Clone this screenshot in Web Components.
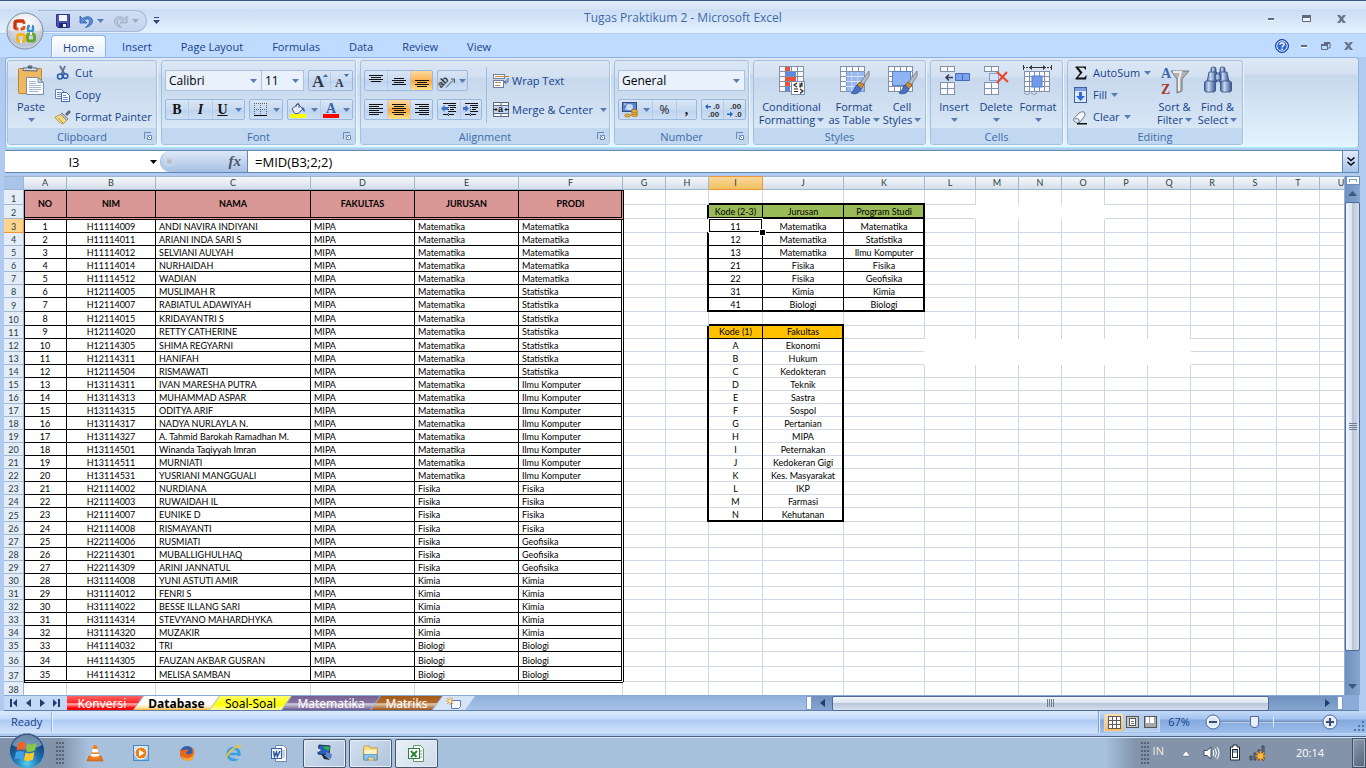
<!DOCTYPE html>
<html lang="id">
<head>
<meta charset="utf-8">
<title>Tugas Praktikum 2 - Microsoft Excel</title>
<style>
html, body { margin: 0; height: 100%; overflow: hidden; background: #b1caf0; }
</style>
</head>
<body>
<xl-app></xl-app>
<script>
const BASE = `
  :host { display: block; box-sizing: border-box; }
  *, *::before, *::after { box-sizing: border-box; }
  button, input, select { font: inherit; color: inherit; margin: 0; padding: 0; border: 0; background: none; border-radius: 0; outline: 0; }
  button { display: flex; align-items: center; justify-content: center; white-space: nowrap; }
  select { appearance: none; }
  xl-icon { flex: none; }
`;
function define(name, css, html, setup) {
  const tpl = document.createElement('template');
  tpl.innerHTML = '<style>' + BASE + css + '</style>' + html;
  customElements.define(name, class extends HTMLElement {
    constructor() {
      super();
      this.attachShadow({ mode: 'open' });
    }
    connectedCallback() {
      if (this.shadowRoot.childNodes.length) return;
      this.shadowRoot.append(tpl.content.cloneNode(true));
      if (setup) setup.call(this, this.shadowRoot);
    }
  });
}

/* ---------- icons: [width, height, markup] ---------- */
const lines = (list, c) => list.map(([x, y, w]) => `<rect x="${x}" y="${y}" width="${w}" height="1" fill="${c || '#111'}"/>`).join('');
const grid = (x, y, c, r, w, h, s) => {
  let o = `<rect x="${x}" y="${y}" width="${c * w + 1}" height="${r * h + 1}" fill="${s || '#8290a8'}"/>`;
  for (let i = 0; i < c; i++) for (let j = 0; j < r; j++)
    o += `<rect x="${x + i * w + 1}" y="${y + j * h + 1}" width="${w - 1}" height="${h - 1}" fill="#f8faff"/>`;
  return o;
};
const brush = `<path d="M27 4L18 16l3 2 6-9z" fill="#b9bcc4" stroke="#70757f" stroke-width=".8"/><path d="M18 15l-3 3 4 4 3-4z" fill="#c98b3c" stroke="#7a5426" stroke-width=".8"/><path d="M15 18c-2 1-2 3-3 5-1 2-3 2-3 3 4 2 9 0 10-4z" fill="#4672c4" stroke="#2c4c90" stroke-width=".8"/>`;
const grip = (() => { let o = ''; for (let y = 0; y < 6; y++) for (let x = 0; x < 3; x++) o += `<rect x="${x * 3}" y="${y * 4}" width="2" height="2" fill="#53637a"/>`; return o; })();
const ICONS = {
  arrow: [7, 4, `<path d="M0 0h7L3.500 4z" fill="#587db5"/>`],
  arrowdim: [7, 4, `<path d="M0 0h7L3.500 4z" fill="#a0aabd"/>`],
  arrowblack: [7, 4, `<path d="M0 0h7L3.500 4z" fill="#000"/>`],
  launch: [8, 8, `<path d="M.5 7V.5H7" fill="none" stroke="#6787b4"/><path d="M3.500 4.500v3h4v-4h-3" fill="#fff" stroke="#6787b4"/><path d="M3 3l3 3" stroke="#6787b4"/>`],
  office: [38, 38, `<defs><radialGradient id="o" cx=".5" cy=".3" r=".75"><stop offset="0" stop-color="#fff"/><stop offset=".55" stop-color="#e3e6ec"/><stop offset=".8" stop-color="#c3cad6"/><stop offset="1" stop-color="#f4f8ff"/></radialGradient></defs><circle cx="19" cy="19" r="18" fill="url(#o)" stroke="#7d899e"/><path d="M2 19a17 17 0 0 0 34 0z" fill="#a9b4c8" opacity=".35"/><g fill="none" stroke-width="3"><rect x="9" y="9" width="9" height="8" rx="2" stroke="#e2561a"/><path d="M9 17V11q0-2 2-2h7" stroke="#c83210"/><rect x="22" y="14" width="5" height="5" rx="1" stroke="#3d8fd4" stroke-width="2.500"/><rect x="11.500" y="22.500" width="7" height="7" rx="2" stroke="#f4b41e"/><rect x="21.500" y="22" width="7" height="7" rx="2" stroke="#62a832"/></g><g fill="#eef0f5"><rect x="12.500" y="15" width="2" height="4"/><rect x="16" y="12" width="4" height="2"/><rect x="24" y="12" width="2" height="3"/><rect x="14" y="28" width="2" height="3"/><rect x="24" y="20" width="2" height="3"/></g>`],
  save: [14, 14, `<path d="M.5.5h13v13H2L.5 12z" fill="#4f55b5" stroke="#2f3487"/><rect x="3" y="1" width="8" height="6" fill="#f4f6ff"/><rect x="3" y="9" width="8" height="5" fill="#23276b"/><rect x="7" y="10" width="3" height="3" fill="#e8ecfa"/>`],
  undo: [14, 13, `<path d="M1 1v7h7L5.500 5.500C8 3 11 4 10.500 7c-.3 2-2 3.500-4 5.500 4-1 7-3 7-6.500C13.500 1.500 8 .5 3.500 3.500z" fill="#5b8bd8" stroke="#2e5cab" stroke-width=".8"/>`],
  redo: [14, 13, `<path d="M13 1v7H6l2.500-2.500C6 3 3 4 3.500 7c.3 2 2 3.500 4 5.500-4-1-7-3-7-6.500C.5 1.500 6 .5 10.500 3.500z" fill="#bcc8da" stroke="#98a7bf" stroke-width=".8"/>`],
  custom: [7, 7, `<path d="M1 0h5v1H1zM0 3h7L3.500 7z" fill="#2d4a7b"/>`],
  min: [7, 3, `<rect width="6" height="2" fill="#5f6b7d"/><rect y="2" width="6" height="1" fill="#fff"/>`],
  max: [10, 8, `<path d="M.5.500h8v6h-8z" fill="#eef4fd" stroke="#5f6b7d"/><rect width="9" height="3" fill="#5f6b7d"/>`],
  restore: [10, 8, `<path d="M3 1h6v5H7M.5 2.500h6v5h-6z" fill="none" stroke="#5f6b7d"/><path d="M3 0h6v2H3zM0 2h7v2H0z" fill="#5f6b7d"/>`],
  close: [9, 8, `<path d="M0 0h3l1.500 2L6 0h3L6 4l3 4H6L4.500 6 3 8H0l3-4z" fill="#69758a"/>`],
  help: [14, 14, `<circle cx="7" cy="7" r="6.500" fill="#2f66cf" stroke="#17439b"/><circle cx="7" cy="7" r="5.200" fill="none" stroke="#e8f0ff"/><path d="M5 5.500C5 3.500 9 3.500 9 5.500 9 7 7 7 7 8.500M7 9.500V11" stroke="#fff" stroke-width="1.500" fill="none"/>`],
  paste: [28, 32, `<rect x="1.500" y="3.500" width="23" height="25" rx="1" fill="#eeb95e" stroke="#ba8236"/><path d="M6 5.500V3h4c0-3 6-3 6 0h4v3z" fill="#d7dce6" stroke="#596780"/><rect x="11" y="1.500" width="4" height="2" fill="#4b5569"/><path d="M9.500 12.500h12l5 5v12h-17z" fill="#fafcff" stroke="#7c8cab"/><path d="M21 12.500v5h5z" fill="#c7d3ea" stroke="#7c8cab"/>${lines([[12, 16, 7], [12, 18, 7], [12, 20, 12], [12, 22, 12], [12, 24, 12], [12, 26, 9]], '#a9b6cf')}`],
  cut: [16, 16, `<path d="M5 1l4.500 8M10 1L6.500 9" stroke="#62708a" stroke-width="1.800"/><circle cx="5" cy="11.500" r="2.500" fill="none" stroke="#2f5cae" stroke-width="1.600"/><circle cx="10.500" cy="11" r="2.300" fill="none" stroke="#2f5cae" stroke-width="1.600"/>`],
  copy: [16, 16, `<path d="M.5 2.500h6l3 3v6h-9z" fill="#fff" stroke="#5b7fc0"/>${lines([[2, 5, 4], [2, 7, 5], [2, 9, 5]], '#6c90d0')}<path d="M6.500 5.500h5l3 3v6h-8z" fill="#fff" stroke="#3f66ae"/>${lines([[8, 8, 3], [8, 10, 5], [8, 12, 5]], '#6c90d0')}`],
  painter: [16, 16, `<path d="M10 5l4-4 2 2-4 4z" fill="#62677c"/><path d="M7 4l6 6-2 2-6-6z" fill="#b9c0d0" stroke="#636c80" stroke-width=".8"/><path d="M5.500 5.500L0 8c2 4 5 6 8 7l3.500-3.500z" fill="#f0d886" stroke="#a88b33" stroke-width=".8"/><path d="M3 9l5 5" stroke="#b89a42"/>`],
  grow: [18, 16, `<text x="1" y="14" font-family="Liberation Serif,serif" font-weight="700" font-size="17" fill="#333a47">A</text><path d="M12 4h5L14.500 1z" fill="#3f6ab5"/>`],
  shrink: [16, 16, `<text x="1" y="14" font-family="Liberation Serif,serif" font-weight="700" font-size="12" fill="#333a47">A</text><path d="M10 1h5L12.500 4z" fill="#3f6ab5"/>`],
  borders: [14, 14, `<path d="M.5 0v12M6.500 0v12M12.500 0v12M0 .5h13M0 6.500h13" stroke="#5d6675" stroke-dasharray="1 1" fill="none"/><rect y="12" width="13" height="1" fill="#000"/>`],
  fill: [17, 16, `<path d="M2 7l6-5 5 5-5 4.500H5z" fill="#e8eefa" stroke="#4a5875"/><path d="M6 5c0-4 3-5 3-2v3" fill="none" stroke="#4a5875"/><path d="M12 5c3 1 3 3 2.500 5-2-1-1-3-3-3z" fill="#3366b8"/><rect y="12" width="16" height="4" fill="#ffff00"/>`],
  color: [16, 16, `<text x="3" y="11" font-family="Liberation Serif,serif" font-weight="700" font-size="14" fill="#3b5ea6">A</text><rect y="12" width="16" height="4" fill="#ff0000"/>`],
  vtop: [14, 14, lines([[0, 1, 14], [2, 3, 10], [0, 5, 14], [2, 7, 10]])],
  vmid: [14, 14, lines([[2, 4, 10], [0, 6, 14], [2, 8, 10], [0, 10, 14]])],
  vbot: [14, 14, lines([[0, 6, 14], [2, 8, 10], [0, 10, 14], [2, 12, 10]])],
  left: [14, 12, lines([[0, 0, 14], [0, 2, 10], [0, 4, 14], [0, 6, 10], [0, 8, 14], [0, 10, 10]])],
  center: [14, 12, lines([[0, 0, 14], [2, 2, 10], [0, 4, 14], [2, 6, 10], [0, 8, 14], [2, 10, 10]])],
  right: [14, 12, lines([[0, 0, 14], [4, 2, 10], [0, 4, 14], [4, 6, 10], [0, 8, 14], [4, 10, 10]])],
  orient: [16, 16, `<text x="-1" y="13" font-family="Liberation Sans,sans-serif" font-weight="700" font-size="10" fill="#333" transform="rotate(-45 3 12)">ab</text><path d="M6 14.500l8-8M14.500 10V6H11" stroke="#555" fill="none"/>`],
  outdent: [16, 14, lines([[2, 0, 5], [8, 0, 7], [8, 2, 7], [9, 4, 6], [9, 6, 4], [8, 8, 7], [2, 11, 5], [8, 11, 5]]) + `<path d="M7.500 0v14" stroke="#333" stroke-dasharray="1 1"/><path d="M0 5.500L3.500 2v2H7v3H3.500v2z" fill="#3f72c8"/>`],
  indent: [16, 14, lines([[2, 0, 5], [8, 0, 7], [8, 2, 7], [9, 4, 6], [9, 6, 4], [8, 8, 7], [2, 11, 5], [8, 11, 5]]) + `<path d="M7.500 0v14" stroke="#333" stroke-dasharray="1 1"/><path d="M6 5.500L2.500 2v2H0v3h2.500v2z" fill="#3f72c8"/>`],
  wrap: [16, 16, `<rect x=".5" y="1.500" width="11" height="4" fill="#fff" stroke="#6c7f9c"/><path d="M2 3.500h14" stroke="#c08a4a"/><rect x=".5" y="7.500" width="10" height="7" fill="#fff" stroke="#6c7f9c"/><path d="M2 9.500h6M2 12.500h5" stroke="#c08a4a"/><path d="M15 5v4h-3M13.500 7L11 9l2.500 2" stroke="#41659c" fill="none"/>`],
  merge: [16, 16, `<rect x=".5" y=".5" width="15" height="14" fill="#fff" stroke="#5c6a84"/><path d="M0 3.500h16M0 11.500h16M8 0v3.500M8 11.500V15" stroke="#5c6a84"/><rect x="1" y="4" width="14" height="7" fill="#c7d9f5"/><text x="5" y="10" font-family="Liberation Sans,sans-serif" font-weight="700" font-size="9" fill="#111">a</text><path d="M0 7.500h4M2.500 6L4 7.500 2.500 9M16 7.500h-4M13.500 6L12 7.500 13.500 9" stroke="#222" fill="none"/>`],
  money: [17, 17, `<rect x=".5" y="1.500" width="14" height="9" fill="#5f86cc" stroke="#2c4a86"/><ellipse cx="7.500" cy="6" rx="3.500" ry="3" fill="#c8d8f4"/><path d="M3 8h6M2 3h2" stroke="#dfe9fb"/><g fill="#f0b93c" stroke="#9a6a14" stroke-width=".7"><ellipse cx="12.500" cy="14" rx="3" ry="1.500"/><ellipse cx="12.500" cy="12" rx="3" ry="1.500"/><ellipse cx="12.500" cy="10" rx="3" ry="1.500"/><ellipse cx="5.500" cy="14.500" rx="3" ry="1.500"/></g>`],
  incdec: [16, 14, `<g font-family="Liberation Sans,sans-serif" font-weight="700" font-size="8" fill="#333"><text x="8" y="6">.0</text><text x="3" y="14">.00</text></g><path d="M0 3.500L3 1v2h3v1.500H3v2z" fill="#2f63c0"/>`],
  decdec: [16, 14, `<g font-family="Liberation Sans,sans-serif" font-weight="700" font-size="8" fill="#333"><text x="3" y="6">.00</text><text x="8" y="14">.0</text></g><path d="M6 11L3 8.500v2H0V12h3v2z" fill="#2f63c0"/>`],
  cond: [30, 30, grid(2, 1, 4, 5, 6, 5) + `<path d="M8 2h5v4H8zM8 12h11v4H8zM8 17h5v4H8z" fill="#e8523c"/><path d="M8 7h11v4H8zM8 22h5v4H8z" fill="#5b8ae0"/><rect x="14.500" y="16.500" width="13" height="13" fill="#fff" stroke="#7c8cab"/><path d="M20 18l-3 2 3 2M17 24h4M17 26.500h4M23 24l3 2-3 2.500M22 19h4M22 21h4M25 17.500l-2 5" stroke="#222" fill="none" stroke-width="1.200"/>`],
  fmttable: [30, 30, grid(1, 1, 4, 5, 6, 5) + `<path d="M7 7h18v20H7z" fill="#6f9bea" opacity=".7"/><path d="M13 7v20M19 7v20M7 11.500h18M7 16.500h18M7 21.500h18" stroke="#dbe6fb"/><g transform="translate(3 2)">${brush}</g>`],
  cellstyle: [30, 30, grid(1, 1, 4, 5, 6, 5) + `<rect x="5.500" y="6.500" width="18" height="14" fill="#8db3f4" stroke="#5a80c8"/><g transform="translate(3 2)">${brush}</g>`],
  insert: [32, 32, grid(2, 1, 2, 1, 7, 5) + grid(2, 17, 2, 2, 7, 6) + `<path d="M17.500 8.500h14v7h-14zM24.500 8.500v7" fill="#7ba2ee" stroke="#476db8"/><path d="M8 12.500h7M11 9.500l-3 3 3 3" stroke="#333f55" fill="none" stroke-width="1.500"/>`],
  delete: [32, 32, grid(4, 1, 2, 1, 7, 5) + grid(4, 17, 2, 2, 7, 6) + `<rect x="9.500" y="8.500" width="9" height="7" fill="#d5e3fa" stroke="#3a63b0" stroke-dasharray="1 1"/><path d="M17 7l11 10M27 7L17 18" stroke="#ee4426" stroke-width="2"/>`],
  format: [32, 32, `<path d="M1 2.500h29" stroke="#333" stroke-dasharray="2 1"/><path d="M1.500 0v5M29.500 0v5M8 2.500h14" stroke="#333"/><path d="M7 2.500l3-2.500v5zM24 2.500L21 0v5z" fill="#333"/>` + grid(2, 6, 5, 4, 5, 5) + `<rect x="10" y="11" width="10" height="11" fill="#6f9bea" stroke="#557fd0"/><path d="M2 28q3 3 6 0M9 28q3 3 6 0" stroke="#7c8cab" fill="#fff"/>`],
  sigma: [14, 14, `<path d="M1.500.5h10.500v3h-1C10.500 2 10 1.800 8 1.800H4.500l4 4.700-4.500 5h5c1.500 0 2.300-.5 2.800-2h1l-.8 4H1.500v-1L6 7 1.500 1.500z" fill="#111"/>`],
  filldown: [14, 17, `<rect x=".5" y=".5" width="12" height="15" fill="#dfe9fb" stroke="#42609a"/><rect x="1" y="1" width="11" height="3" fill="#7ca1e3"/><path d="M5 5h3v4h3l-4.500 5L2 9h3z" fill="#2f6bd6"/>`],
  clear: [16, 15, `<path d="M5 13.500L1 11q-1-1 0-2.500L6 3q3-2 5-1l1 2q0 2-1 3L7 12q-1 1.500-2 1.500z" fill="#fafbff" stroke="#6d7789"/><path d="M1.500 9q2-1 4 0 1.500 2 0 4" fill="#dfe4ee" stroke="#6d7789"/><rect x="4" y="13" width="10" height="1.500" fill="#111"/>`],
  sort: [32, 32, `<g font-family="Liberation Serif,serif" font-weight="700" font-size="14"><text x="2" y="13" fill="#3a62ae">A</text><text x="2" y="29" fill="#a8372c">Z</text></g><path d="M12 6h18L23 14v12l-5 2V14z" fill="#b1b2b4" stroke="#77797d"/><path d="M14 7h8l-2 7v12" stroke="#ececec" stroke-width="2" fill="none"/>`],
  find: [30, 30, `<defs><linearGradient id="b"><stop offset="0" stop-color="#3e5f9f"/><stop offset=".35" stop-color="#c9d9f3"/><stop offset="1" stop-color="#35558f"/></linearGradient></defs><g fill="url(#b)" stroke="#2f4b80" stroke-width=".8"><rect x="8" y="2" width="5" height="6" rx="2"/><rect x="17" y="2" width="5" height="6" rx="2"/><path d="M6 7h8v10H4z"/><path d="M16 7h8l2 10H16z"/><rect x="1.500" y="16" width="11" height="11" rx="2"/><rect x="17.500" y="16" width="11" height="11" rx="2"/><rect x="12" y="9" width="6" height="6"/></g>`],
  expand: [8, 9, `<path d="M0.500 0.500L4 3.500 7.500.5M.5 5L4 8 7.500 5" stroke="#000" stroke-width="1.500" fill="none"/>`],
  first: [8, 8, `<path d="M0 0h2v8H0zM7 0v8L3 4z" fill="#1f3c73"/>`],
  prev: [5, 8, `<path d="M5 0v8L0 4z" fill="#1f3c73"/>`],
  next: [5, 8, `<path d="M0 0v8l5-4z" fill="#1f3c73"/>`],
  last: [8, 8, `<path d="M5 0h2v8H5zM0 0v8l4-4z" fill="#1f3c73"/>`],
  up: [9, 5, `<path d="M0 5h9L4.500 0z" fill="#3f557f"/>`],
  down: [9, 5, `<path d="M0 0h9L4.500 5z" fill="#3f557f"/>`],
  newsheet: [16, 13, `<path d="M5.500 3.500h9v6l-2 2h-7z" fill="#f7faff" stroke="#5c7cb0"/><path d="M4 0v8M0 4h8M1 1l6 6M7 1L1 7" stroke="#e59a2c" stroke-width="1"/><circle cx="4" cy="4" r="1.500" fill="#fff3c0"/>`],
  vnormal: [13, 13, grid(0, 0, 3, 3, 4, 4, '#5a5a5a')],
  vpage: [13, 12, `<rect x=".5" y=".5" width="12" height="11" fill="#c8c8c8" stroke="#555"/><rect x="3.500" y="2.500" width="6" height="7" fill="#fff" stroke="#555"/><path d="M5 5.500h3M5 7.500h3" stroke="#777"/>`],
  vbreak: [13, 12, `<rect x=".5" y=".5" width="12" height="11" fill="#a8a8a8" stroke="#555"/><path d="M2 1h3v6H2zM6 1h4v6H6z" fill="#fff"/>`],
  minus: [16, 16, `<circle cx="8" cy="8" r="7" fill="#dbe6f6" stroke="#52699a"/><circle cx="8" cy="8" r="5.500" fill="none" stroke="#fff"/><rect x="4" y="7" width="8" height="2" fill="#3c4e6e"/>`],
  plus: [16, 16, `<circle cx="8" cy="8" r="7" fill="#dbe6f6" stroke="#52699a"/><circle cx="8" cy="8" r="5.500" fill="none" stroke="#fff"/><path d="M4 7h8v2H4zM7 4h2v8H7z" fill="#3c4e6e"/>`],
  resize: [11, 11, `<path d="M8 0h2v2H8zM4 4h2v2H4zM8 4h2v2H8zM0 8h2v2H0zM4 8h2v2H4zM8 8h2v2H8z" fill="#4f73ac"/>`],
  start: [38, 36, `<defs><radialGradient id="s" cx=".5" cy=".85" r=".8"><stop offset="0" stop-color="#4fd0f0"/><stop offset=".45" stop-color="#1f6fae"/><stop offset="1" stop-color="#16325c"/></radialGradient></defs><circle cx="19" cy="18" r="17.500" fill="url(#s)" stroke="#6f9cc4"/><path d="M4 12a16 16 0 0 1 30 0q-15 8-30 0z" fill="#d8ecfb" opacity=".45"/><path d="M10 10q4-2 8 0l-1.500 7.500q-4-2-8 0z" fill="#f0622a"/><path d="M19.500 10.500q4 2 9-.5L27 17.500q-5 2.500-9 .5z" fill="#8bc63f"/><path d="M8 19q4-2 8 0l-1.500 7.500q-4-2-8 0z" fill="#3fa2e6"/><path d="M17.500 19.500q4 2 9-.5L25 26.500q-5 2.500-9 .5z" fill="#fcc92c"/>`],
  grip: [8, 22, grip],
  vlc: [16, 18, `<path d="M2 12h12l2 5H0z" fill="#e9751a" stroke="#c05a10" stroke-width=".6"/><path d="M6.500 1h3L13 14q-5 2-10 0z" fill="#f58220"/><path d="M5.600 5h4.900l.8 3q-3 1-6.500 0zM4.300 10h7.500l.6 2q-4 1.500-8.700 0z" fill="#fff"/>`],
  wmp: [16, 16, `<rect x=".5" y=".5" width="15" height="15" fill="#8fc0ea" stroke="#4a8ac4"/><rect x="1" y="1" width="14" height="5" fill="#cbe3f7"/><circle cx="8" cy="8" r="6" fill="#f07d12" stroke="#fff"/><path d="M6 4.500l5.500 3.500L6 11.500z" fill="#fff"/>`],
  firefox: [16, 16, `<circle cx="8" cy="8" r="7" fill="#2c5fae"/><path d="M1 4q2 2 4 1 3-2 5 1-3 0-3 2 2 3 6 0 1-4-2-7 5 3 4 8-1 6-7 6.500Q1 15 1 8z" fill="#e9671a"/><path d="M2 10q3 4 8 3 4-1 5-5 1 7-6 8-5 0-7-6z" fill="#f9a72b"/>`],
  ie: [17, 17, `<circle cx="8.500" cy="9" r="5.800" fill="none" stroke="#3aa2e2" stroke-width="3"/><path d="M5 9h9" stroke="#3aa2e2" stroke-width="2.500"/><path d="M10 11h7v3h-7z" fill="#a7c0dc"/><path d="M1 15Q-1 9 8 3t8 0q-3-2-8 2T1 15z" fill="#f4c232"/>`],
  word: [16, 17, `<path d="M4.500.5h8l3 3v13h-11z" fill="#fff" stroke="#7187a8"/><path d="M11 6h3M11 8h3M11 10h3M11 12h3" stroke="#8ba6d0"/><rect x=".5" y="3.500" width="10" height="10" fill="#eef3fc" stroke="#365fa9"/><path d="M2.500 6l1 5.500 2-4.500.8 4.500L9 6" fill="none" stroke="#24509e" stroke-width="1.400"/>`],
  remote: [18, 18, `<path d="M3 1l11 1-1 9-11-1z" fill="#2860b8" stroke="#1b2c50"/><path d="M7 2l7 1-1 4-4-2z" fill="#2fb54a"/><path d="M5 10l5 2 4 4-6-1z" fill="#252a38"/><path d="M10 8l6 2-1 5-5-2z" fill="#5b83cc"/><path d="M1 4l4 2-3 2z" fill="#e8eef8"/>`],
  explorer: [17, 16, `<path d="M1.500 2.500l1-1.500h5l1 2h7v12h-14z" fill="#f7dc86" stroke="#c49e3f"/><path d="M3 5h11v5H3z" fill="#fdf3c8"/><path d="M2 9.500h13V15h-3v-3H6v3H2z" fill="#8cc7ee" stroke="#4a90c4" stroke-width=".8"/>`],
  excel: [17, 17, `<path d="M5.500.5h7l3 3v13h-10z" fill="#fff" stroke="#5e9a6a"/><path d="M12 6h2M12 9h2M12 12h2" stroke="#5e9a6a"/><rect x=".5" y="3.500" width="11" height="10" fill="#fff" stroke="#2c8040"/><path d="M3 6l5.500 6M9 6l-6 6" stroke="#2c8040" stroke-width="2"/>`],
  speaker: [16, 16, `<path d="M1 5.500h3L8 2v12l-4-3.500H1z" fill="#fff" stroke="#444f60"/><path d="M10 5q2 3 0 6M12 3.500q3 4.500 0 9M14 2q4 6 0 12" stroke="#fff" fill="none"/>`],
  battery: [12, 16, `<path d="M4 0h4v2h2.500v13h-9V2H4z" fill="#fff" stroke="#222c3a"/><rect x="3.500" y="4.500" width="5" height="8" fill="#9aa8b8" stroke="#222c3a"/><rect x="4" y="8" width="4" height="4" fill="#fff"/>`],
  net: [17, 16, `<path d="M1 11h2v4H1zM5 8h2v7H5zM9 5h2v10H9zM13 1h2v14h-2z" fill="#6f7a88" stroke="#3a4350"/><path d="M11.500 6v10M6.500 11h10M8 7.500l7 7M15 7.500l-7 7" stroke="#f39a1c" stroke-width="1.500"/><circle cx="11.500" cy="11" r="2.800" fill="#ffb836"/>`],
  trayup: [8, 5, `<path d="M0 5h8L4 0z" fill="#fff" stroke="#5b6878" stroke-width=".5"/>`],
};
customElements.define('xl-icon', class extends HTMLElement {
  constructor() { super(); this.attachShadow({ mode: 'open' }); }
  connectedCallback() {
    const [w, h, body] = ICONS[this.getAttribute('name')];
    this.shadowRoot.innerHTML = `<style>:host{display:inline-block;line-height:0;flex:none}svg{display:block;overflow:visible}</style><svg aria-hidden="true" width="${w}" height="${h}" viewBox="0 0 ${w} ${h}">${body}</svg>`;
  }
});

/* ---------- title bar ---------- */
define('xl-titlebar', `
  :host { height: 34px; display: grid; grid-template-columns: 1fr auto 1fr; position: relative;
    border-top: 1px solid #3b5a82; border-bottom: 1px solid #b0cff7;
    background: linear-gradient(#dfe9f9 0 2px, #d6e4f7 8px, #cbddf5 9px, #e4f0fd 31px); }
  .office { position: absolute; left: 6px; top: 11px; z-index: 2; border-radius: 50%; }
  .qat { margin: 9px 0 0 38px; width: 109px; height: 22px; display: flex; align-items: center; padding-left: 18px;
    border: 1px solid #a3bbdf; border-left: 0; border-radius: 0 11px 11px 0; background: linear-gradient(#cfdef3, #c2d4ee); }
  .left { display: flex; }
  .more { margin: 12px 0 0 6px; height: 14px; }
  .qat button + button { margin-left: 9px; }
  .qat .dd { margin-left: 3px; width: 9px; }
  h1 { margin: 0; align-self: center; font: inherit; font-size: 12px; color: #3e6aaa; line-height: 16px; padding-top: 2px; }
  .win { display: flex; justify-content: flex-end; align-items: center; gap: 20px; padding: 4px 17px 0 0; }
  .win button { width: 15px; height: 12px; }
`, `
  <button class="office" aria-label="Office"><xl-icon name="office"></xl-icon></button>
  <div class="left"><div class="qat"><button aria-label="Save"><xl-icon name="save"></xl-icon></button>
  <button aria-label="Undo"><xl-icon name="undo"></xl-icon></button><button class="dd" aria-label="Undo list"><xl-icon name="arrow"></xl-icon></button>
  <button aria-label="Redo"><xl-icon name="redo"></xl-icon></button><button class="dd" aria-label="Redo list"><xl-icon name="arrowdim"></xl-icon></button></div>
  <button class="more" aria-label="Customize"><xl-icon name="custom"></xl-icon></button></div>
  <h1><slot></slot></h1>
  <div class="win"><button aria-label="Minimize"><xl-icon name="min"></xl-icon></button><button aria-label="Maximize"><xl-icon name="max"></xl-icon></button><button aria-label="Close"><xl-icon name="close"></xl-icon></button></div>
`);

/* ---------- ribbon tabs ---------- */
define('xl-tabs', `
  :host { height: 23px; display: flex; padding: 1px 11px 0 49px; background: #bfdbff; color: #15428b; }
  nav { display: flex; flex: 1; gap: 1px; }
  nav button { height: 22px; padding: 2px 14px 0; }
  nav button.on { background: linear-gradient(#fff, #e3edf9); border: 1px solid #8db2e3; border-bottom: 0; border-radius: 4px 4px 0 0; padding: 1px 11px 0; box-shadow: inset 1px 1px 0 #fff; height: 23px; margin: 0 1px 0 2px; }
  .win { display: flex; align-items: center; gap: 8px; }
  .win button { width: 14px; height: 14px; }
`, `
  <nav><button class="on">Home</button><button>Insert</button><button>Page Layout</button><button>Formulas</button><button>Data</button><button>Review</button><button>View</button></nav>
  <div class="win"><button aria-label="Help"><xl-icon name="help"></xl-icon></button><button aria-label="Minimize workbook"><xl-icon name="min"></xl-icon></button><button aria-label="Restore workbook"><xl-icon name="restore"></xl-icon></button><button aria-label="Close workbook"><xl-icon name="close"></xl-icon></button></div>
`);

/* ---------- ribbon group frame ---------- */
define('xl-group', `
  :host { display: flex; flex-direction: column; height: 85px; border: 1px solid #a3c0e0; border-radius: 3px; overflow: hidden;
    background: linear-gradient(#dce7f4, #d3e0f1 16px, #c7d8ed 17px, #d8e6f5 68px); box-shadow: 1px 1px 0 #eef5fd; }
  .body { flex: 1; display: flex; align-items: flex-start; }
  footer { height: 16px; display: flex; align-items: center; background: #c1d8f0; color: #3e6aaa; line-height: 15px; }
  footer span { flex: 1; text-align: center; }
  footer button { width: 16px; height: 14px; margin-left: -16px; }
`, `<div class="body"><slot></slot></div><footer><span></span></footer>`, function (root) {
  root.querySelector('span').textContent = this.getAttribute('label');
  if (this.hasAttribute('launcher')) {
    root.querySelector('footer').insertAdjacentHTML('beforeend', '<button aria-label="More options"><xl-icon name="launch"></xl-icon></button>');
  }
});

const bigButton = (icon, a, b) => `<button class="big"><xl-icon name="${icon}"></xl-icon><span>${a}</span><span class="l2">${b || ''}<xl-icon name="arrow"></xl-icon></span></button>`;

/* ---------- ribbon ---------- */
define('xl-ribbon', `
  :host { height: 91px; margin: 0 7px 0 5px; display: flex; gap: 4px; padding: 2px 2px 2px 1px; color: #15428b;
    border: 1px solid #8db2e3; border-bottom-color: #a5eef8; border-radius: 4px;
    background: linear-gradient(#dfe9f5, #d4e1f2 16px, #c7d8ed 17px, #e3f4fd 88px); }
  .clip { width: 150px; } .font { width: 195px; } .align { width: 250px; } .num { width: 135px; }
  .styles { width: 173px; } .cells { width: 133px; } .edit { width: 176px; }
  .clip, .font, .align, .num, .styles, .cells, .edit { flex: none; }
  .big { display: flex; flex-direction: column; align-items: center; justify-content: flex-start; height: 66px; padding-top: 4px; line-height: 13px; }
  .big > xl-icon { height: 35px; }
  .l2 { display: flex; align-items: center; gap: 2px; height: 13px; }
  .small { display: flex; flex-direction: column; align-items: flex-start; padding-top: 1px; }
  .small button { height: 22px; gap: 4px; }
  .small .ic { width: 17px; display: flex; justify-content: center; }
  .rows { display: flex; flex-direction: column; gap: 8px; padding: 9px 3px 0; }
  .row { display: flex; gap: 4px; height: 21px; }
  .box { display: flex; border: 1px solid #9ab8de; border-radius: 2px; background: linear-gradient(#d9e6f6, #c8daf0 50%, #bcd2ee 51%, #cfe0f5); }
  .box button + button { border-left: 1px solid #b5cbe8; }
  .box button.dd { border-left: 0; }
  .box button.on { background: linear-gradient(#fcd9a0, #fdb75b 45%, #fca63c 50%, #fee08a); }
  .pick { display: flex; align-items: center; background: #e9f1fc; border: 1px solid #abc1de; color: #000; padding-right: 4px; }
  .pick select { flex: 1; min-width: 0; padding-left: 3px; font-size: 12px; line-height: 16px; }
  .pick xl-icon { pointer-events: none; }
  .serif { font-family: "Liberation Serif", serif; font-weight: 700; font-size: 14px; color: #111; }
  .sep { width: 1px; height: 56px; margin: 6px 6px 0 1px; background: #9fbbe0; }
  .texts { display: flex; flex-direction: column; gap: 8px; padding-top: 9px; align-items: flex-start; }
  .texts button { height: 21px; gap: 3px; }
  .texts .a { margin-left: 4px; }
`, `
  <xl-group class="clip" label="Clipboard" launcher>
    <button class="big" style="width:46px"><xl-icon name="paste"></xl-icon><span>Paste</span><span class="l2"><xl-icon name="arrow"></xl-icon></span></button>
    <div class="small"><button><span class="ic"><xl-icon name="cut"></xl-icon></span>Cut</button><button><span class="ic"><xl-icon name="copy"></xl-icon></span>Copy</button><button><span class="ic"><xl-icon name="painter"></xl-icon></span>Format Painter</button></div>
  </xl-group>
  <xl-group class="font" label="Font" launcher>
    <div class="rows">
      <div class="row"><label class="pick" style="width:97px;margin-right:-5px"><select aria-label="Font"><option>Calibri</option></select><xl-icon name="arrow"></xl-icon></label>
        <label class="pick" style="width:43px"><select aria-label="Font size"><option>11</option></select><xl-icon name="arrow"></xl-icon></label>
        <div class="box"><button style="width:21px" aria-label="Grow font"><xl-icon name="grow"></xl-icon></button><button style="width:22px" aria-label="Shrink font"><xl-icon name="shrink"></xl-icon></button></div></div>
      <div class="row"><div class="box serif"><button style="width:22px">B</button><button style="width:24px"><i>I</i></button><button style="width:20px"><u>U</u></button><button class="dd" style="width:12px" aria-label="Underline style"><xl-icon name="arrow"></xl-icon></button></div>
        <div class="box"><button style="width:21px" aria-label="Borders"><xl-icon name="borders"></xl-icon></button><button class="dd" style="width:11px" aria-label="Border list"><xl-icon name="arrow"></xl-icon></button></div>
        <div class="box"><button style="width:21px" aria-label="Fill color"><xl-icon name="fill"></xl-icon></button><button class="dd" style="width:11px" aria-label="Fill list"><xl-icon name="arrow"></xl-icon></button><button style="width:21px" aria-label="Font color"><xl-icon name="color"></xl-icon></button><button class="dd" style="width:11px" aria-label="Color list"><xl-icon name="arrow"></xl-icon></button></div></div>
    </div>
  </xl-group>
  <xl-group class="align" label="Alignment" launcher>
    <div class="rows">
      <div class="row"><div class="box"><button style="width:22px" aria-label="Top align"><xl-icon name="vtop"></xl-icon></button><button style="width:23px" aria-label="Middle align"><xl-icon name="vmid"></xl-icon></button><button class="on" style="width:22px" aria-label="Bottom align"><xl-icon name="vbot"></xl-icon></button></div>
        <div class="box"><button style="width:19px" aria-label="Orientation"><xl-icon name="orient"></xl-icon></button><button class="dd" style="width:10px" aria-label="Orientation list"><xl-icon name="arrow"></xl-icon></button></div></div>
      <div class="row"><div class="box"><button style="width:22px" aria-label="Align left"><xl-icon name="left"></xl-icon></button><button class="on" style="width:23px" aria-label="Center"><xl-icon name="center"></xl-icon></button><button style="width:22px" aria-label="Align right"><xl-icon name="right"></xl-icon></button></div>
        <div class="box"><button style="width:22px" aria-label="Decrease indent"><xl-icon name="outdent"></xl-icon></button><button style="width:21px" aria-label="Increase indent"><xl-icon name="indent"></xl-icon></button></div></div>
    </div>
    <div class="sep"></div>
    <div class="texts"><button><xl-icon name="wrap"></xl-icon>Wrap Text</button><button><xl-icon name="merge"></xl-icon>Merge &amp; Center<xl-icon class="a" name="arrow"></xl-icon></button></div>
  </xl-group>
  <xl-group class="num" label="Number" launcher>
    <div class="rows">
      <div class="row"><label class="pick" style="width:127px"><select aria-label="Number format"><option>General</option></select><xl-icon name="arrow"></xl-icon></label></div>
      <div class="row"><div class="box"><button style="width:22px" aria-label="Accounting format"><xl-icon name="money"></xl-icon></button><button class="dd" style="width:11px" aria-label="Currency list"><xl-icon name="arrow"></xl-icon></button><button style="width:24px;color:#222;font-size:12px">%</button><button class="serif" style="width:20px">,</button></div>
        <div class="box"><button style="width:21px" aria-label="Increase decimal"><xl-icon name="incdec"></xl-icon></button><button style="width:22px" aria-label="Decrease decimal"><xl-icon name="decdec"></xl-icon></button></div></div>
    </div>
  </xl-group>
  <xl-group class="styles" label="Styles"><div style="width:3px"></div>
    <div style="display:grid;grid-template-columns:69px 56px 40px">${bigButton('cond', 'Conditional', 'Formatting')}${bigButton('fmttable', 'Format', 'as Table')}${bigButton('cellstyle', 'Cell', 'Styles')}</div>
  </xl-group>
  <xl-group class="cells" label="Cells"><div style="width:2px"></div>
    <div style="display:grid;grid-template-columns:42px 42px 42px">${bigButton('insert', 'Insert')}${bigButton('delete', 'Delete')}${bigButton('format', 'Format')}</div>
  </xl-group>
  <xl-group class="edit" label="Editing"><div style="width:4px"></div>
    <div class="small" style="width:81px"><button><span class="ic"><xl-icon name="sigma"></xl-icon></span>AutoSum<xl-icon name="arrow"></xl-icon></button><button><span class="ic"><xl-icon name="filldown"></xl-icon></span>Fill<xl-icon name="arrow"></xl-icon></button><button><span class="ic"><xl-icon name="clear"></xl-icon></span>Clear<xl-icon name="arrow"></xl-icon></button></div>
    <div style="display:grid;grid-template-columns:43px 43px">${bigButton('sort', 'Sort &amp;', 'Filter')}${bigButton('find', 'Find &amp;', 'Select')}</div>
  </xl-group>
`);

/* ---------- formula bar ---------- */
define('xl-formula', `
  :host { height: 23px; margin: 2px 7px 3px 5px; display: flex; border: 1px solid #5f88b3; border-left: 0; background: #fff; color: #000; font-size: 13px; }
  .name { width: 141px; padding-right: 3px; text-align: center; }
  .dd { width: 14px; }
  .fx { width: 88px; border: 1px solid #9db8dd; border-width: 0 1px 0 1px; border-right-color: #5f88b3; border-radius: 10px 0 0 10px; display: flex; align-items: center; justify-content: space-between; padding: 0 6px 0 4px;
    background: linear-gradient(#dde9f9, #a7c0e4); }
  .dot { width: 9px; height: 9px; border-radius: 50%; background: radial-gradient(#a9b4c8, #e6eefa); }
  .fx button { font: italic 700 15px "Liberation Serif", serif; color: #4c566a; }
  .text { flex: 1; padding: 0 7px; min-width: 0; }
  .more { width: 16px; border-left: 1px solid #5f88b3; background: linear-gradient(#dfeafa, #a9c4ea); }
`, `
  <input class="name" aria-label="Name box" value="I3"><button class="dd" aria-label="Name list"><xl-icon name="arrowblack"></xl-icon></button>
  <div class="fx"><span class="dot"></span><button>fx</button></div>
  <input class="text" aria-label="Formula" value="=MID(B3;2;2)"><button class="more" aria-label="Expand formula bar"><xl-icon name="expand"></xl-icon></button>
`);

/* ---------- worksheet ---------- */
const COLS = 'ABCDEFGHIJKLMNOPQRSTU'.split('');
const WIDTHS = [43, 89, 155, 104, 104, 104, 43, 43, 54, 81, 81, 51, 43, 43, 43, 43, 43, 43, 43, 43, 43];
const HEIGHTS = { 1: 15, 2: 14, 3: 14, 9: 14, 10: 14, 25: 14, 36: 15, 37: 15, 38: 14 };
const RAISED = [2, 9, 10, 11, 25, 37];
const STUDENTS = [['H11114009', 'ANDI NAVIRA INDIYANI'], ['H11114011', 'ARIANI INDA SARI S'], ['H11114012', 'SELVIANI AULYAH'], ['H11114014', 'NURHAIDAH'], ['H11114512', 'WADIAN'], ['H12114005', 'MUSLIMAH R'], ['H12114007', 'RABIATUL ADAWIYAH'], ['H12114015', 'KRIDAYANTRI S'], ['H12114020', 'RETTY CATHERINE'], ['H12114305', 'SHIMA REGYARNI'], ['H12114311', 'HANIFAH'], ['H12114504', 'RISMAWATI'], ['H13114311', 'IVAN MARESHA PUTRA'], ['H13114313', 'MUHAMMAD ASPAR'], ['H13114315', 'ODITYA ARIF'], ['H13114317', 'NADYA NURLAYLA N.'], ['H13114327', 'A. Tahmid Barokah Ramadhan M.'], ['H13114501', 'Winanda Taqiyyah Imran'], ['H13114511', 'MURNIATI'], ['H13114531', 'YUSRIANI MANGGUALI'], ['H21114002', 'NURDIANA'], ['H21114003', 'RUWAIDAH IL'], ['H21114007', 'EUNIKE D'], ['H21114008', 'RISMAYANTI'], ['H22114006', 'RUSMIATI'], ['H22114301', 'MUBALLIGHULHAQ'], ['H22114309', 'ARINI JANNATUL'], ['H31114008', 'YUNI ASTUTI AMIR'], ['H31114012', 'FENRI S'], ['H31114022', 'BESSE ILLANG SARI'], ['H31114314', 'STEVYANO MAHARDHYKA'], ['H31114320', 'MUZAKIR'], ['H41114032', 'TRI'], ['H41114305', 'FAUZAN AKBAR GUSRAN'], ['H41114312', 'MELISA SAMBAN']];
const JURUSAN = { 11: 'Matematika', 12: 'Matematika', 13: 'Matematika', 21: 'Fisika', 22: 'Fisika', 31: 'Kimia', 41: 'Biologi' };
const PRODI = { 11: 'Matematika', 12: 'Statistika', 13: 'Ilmu Komputer', 21: 'Fisika', 22: 'Geofisika', 31: 'Kimia', 41: 'Biologi' };
const CODES = [11, 12, 13, 21, 22, 31, 41];
const FAKULTAS = ['Ekonomi', 'Hukum', 'Kedokteran', 'Teknik', 'Sastra', 'Sospol', 'Pertanian', 'MIPA', 'Peternakan', 'Kedokeran Gigi', 'Kes. Masyarakat', 'IKP', 'Farmasi', 'Kehutanan'];

function cellText(c, r) {
  if (r >= 3 && r <= 37 && c < 6) {
    const [nim, nama] = STUDENTS[r - 3], code = nim.slice(1, 3);
    return [r - 2, nim, nama, 'MIPA', JURUSAN[code], PRODI[code]][c];
  }
  if (r === 2 && c >= 8 && c <= 10) return ['Kode (2-3)', 'Jurusan', 'Program Studi'][c - 8];
  if (r >= 3 && r <= 9 && c >= 8 && c <= 10) { const k = CODES[r - 3]; return [k, JURUSAN[k], PRODI[k]][c - 8]; }
  if (r === 11 && (c === 8 || c === 9)) return ['Kode (1)', 'Fakultas'][c - 8];
  if (r >= 12 && r <= 25 && (c === 8 || c === 9)) return c === 8 ? 'ABCDEFGHIJKLMN'[r - 12] : FAKULTAS[r - 12];
  return '';
}
function cellClass(c, r) {
  const k = [];
  if (c >= 2 && c <= 5) k.push('l');
  if (RAISED.includes(r)) k.push('up');
  if (r <= 37 && c < 6) { k.push('r1', 'b1'); if (c === 5) k.push('rd'); if (c === 0) k.push('le'); if (r === 3) k.push('to'); if (r === 37) k.push('bd'); }
  if (r <= 37 && c === 6) k.push('le');
  if (r === 38 && c < 6) k.push('to');
  const t1 = r >= 2 && r <= 9, t2 = r >= 11 && r <= 25;
  if (c === 7 && (t1 || t2)) k.push('r2');
  if (c === 8 && (t1 || t2)) k.push('r1');
  if (c === 9 && (t1 || t2)) k.push(t2 ? 'r2' : 'r1');
  if (c === 10 && t1) k.push('r2');
  if (c >= 8 && c <= 10) {
    if (r === 1 || r === 2 || r === 9) k.push('b2'); else if (t1) k.push('b1');
    if (c < 10) { if (r === 10 || r === 25) k.push('b2'); if (r === 11) k.push('b1'); }
    if (r === 2) k.push('green');
    if (r === 11 && c < 10) k.push('gold');
  }
  if (r === 2 && c >= 11 && c <= 14) k.push('r0');
  if ((r === 1 || r === 2) && c >= 12 && c <= 14) k.push('b0');
  if ((r === 12 || r === 13) && c >= 10 && c <= 16) k.push('r0');
  if (r >= 11 && r <= 13 && c >= 11 && c <= 16) k.push('b0');
  return k.join(' ');
}
define('xl-sheet', `
  :host { flex: 1; min-width: 0; overflow: hidden; background: #fff; color: #000; font: 9px/11px Lato, sans-serif; }
  table { table-layout: fixed; width: 1359px; border-collapse: separate; border-spacing: 0; }
  th, td { padding: 0; white-space: nowrap; overflow: hidden; vertical-align: bottom; text-align: center; font-weight: 400; }
  /* each cell paints its own right and bottom rule; outer frames are two pixels thick or doubled */
  td { --r: #d0d7e5; --b: #d0d7e5; --rw: 1px; --bw: 1px; --ro: 0px; --bo: 0px; --rh: 100%; --bx: 100%; --s1: 0 0 #0000; --s2: 0 0 #0000;
    padding: 0 1px 1px 0;
    background-image: linear-gradient(var(--r) 0 0), linear-gradient(var(--b) 0 0);
    background-size: var(--rw) var(--rh), var(--bx) var(--bw);
    background-position: right var(--ro) top 0, left 0 bottom var(--bo);
    background-repeat: no-repeat;
    box-shadow: var(--s1), var(--s2); }
  td.l { text-align: left; padding-left: 3px; }
  td.up { padding-bottom: 2px; }
  .r0 { --r: #fff; } .b0 { --b: #fff; }
  .r1 { --r: #000; } .b1 { --b: #000; }
  .r2 { --r: #000; --rw: 2px; } .b2 { --b: #000; --bw: 2px; --rh: calc(100% - 2px); }
  .rd { --ro: 1px; --bx: calc(100% - 1px); } .bd { --b: #000; --bo: 1px; --rh: calc(100% - 1px); }
  .le { --s1: inset 1px 0 #000; } .to { --s2: inset 0 1px #000; }
  .green { background-color: #9bbb59; } .gold { background-color: #ffc000; }
  td.head { background-color: #d99795; font-weight: 700; vertical-align: middle; padding: 0 1px 2px 0; }
  thead th { height: 14px; background: linear-gradient(#f6f9fc, #d5dde9); border: solid #9eb6ce; border-width: 1px 1px 1px 0; color: #27413e; line-height: 12px; }
  thead th.corner { background: #a9c4e9; }
  thead th.sel { background: linear-gradient(#f8d79b, #f1c15f); border-color: #f29536; }
  tbody th { background: #e4ecf7; border: solid #9eb6ce; border-width: 0 1px 1px 0; color: #27413e; vertical-align: bottom; }
  tbody th.sel { background: #ffd58d; border-color: #f29536; }
  td.cursor { position: relative; overflow: visible; }
  .ring { position: absolute; inset: 0 1px 1px 0; border: 1px solid #000; box-shadow: 0 0 0 1px #fff, -2px 0 #fff; }
  .ring::after { content: ""; position: absolute; right: -4px; bottom: -4px; width: 5px; height: 5px; background: #000; box-shadow: 0 0 0 1px #fff; }
`, `<table aria-label="Database"></table>`, root => {
  let h = '<colgroup><col style="width:20px">' + WIDTHS.map(w => `<col style="width:${w}px">`).join('') + '</colgroup><thead><tr><th class="corner" aria-label="Select all"></th>';
  h += COLS.map(c => `<th${c === 'I' ? ' class="sel"' : ''}>${c}</th>`).join('') + '</tr></thead><tbody>';
  const heads = ['NO', 'NIM', 'NAMA', 'FAKULTAS', 'JURUSAN', 'PRODI'];
  for (let r = 1; r <= 38; r++) {
    h += `<tr style="height:${HEIGHTS[r] || 13}px"><th${r === 3 ? ' class="sel"' : ''}>${r}</th>`;
    for (let c = 0; c < COLS.length; c++) {
      if (c < 6 && r <= 2) {
        if (r === 1) h += `<td rowspan="2" class="head to r1 ${c === 5 ? 'rd' : ''} bd ${c === 0 ? 'le' : ''}">${heads[c]}</td>`;
        continue;
      }
      const cur = c === 8 && r === 3;
      h += `<td class="${cellClass(c, r)}${cur ? ' cursor' : ''}">${cellText(c, r)}${cur ? '<div class="ring"></div>' : ''}</td>`;
    }
    h += '</tr>';
  }
  root.querySelector('table').innerHTML = h + '</tbody>';
});

define('xl-vscroll', `
  :host { width: 16px; display: flex; flex-direction: column; align-items: center; background: linear-gradient(90deg, #6f91bf, #86a5cf); border-left: 1px solid #8fb0dc; }
  .split { width: 14px; height: 9px; background: #fff; border: 1px solid #6d8fbd; display: flex; align-items: center; justify-content: center; }
  .split::after { content: ""; width: 8px; height: 3px; border: 1px solid #7f9bc4; border-bottom: 0; }
  button { height: 17px; width: 15px; }
  .thumb { width: 15px; flex: 1; margin-bottom: 27px; border: 1px solid #4f6a95; border-radius: 2px; background: linear-gradient(90deg, #f3f6fb, #dde5f0 45%, #b9c7dc 50%, #d5dfec); display: flex; align-items: center; justify-content: center; }
  .thumb::after { content: ""; width: 8px; height: 7px; background: repeating-linear-gradient(#6f7d92 0 1px, #0000 1px 2px); }
`, `<div class="split"></div><button aria-label="Scroll up"><xl-icon name="up"></xl-icon></button><div class="thumb"></div><button aria-label="Scroll down"><xl-icon name="down"></xl-icon></button>`);

/* ---------- sheet tabs and horizontal scroll ---------- */
define('xl-sheettabs', `
  :host { height: 16px; margin: 0 7px 0 4px; display: flex; align-items: stretch; background: linear-gradient(#8fb0dd, #a7c2e8); border-top: 1px solid #86a9d6; border-bottom: 1px solid #5f7fae; color: #000; font: 12px/14px "Noto Sans", sans-serif; }
  .nav { width: 63px; display: flex; justify-content: space-around; align-items: center; background: #c4d9f5; padding: 0 2px; }
  .tabs { flex: 1; display: flex; }
  .tab { height: 14px; flex: none; margin-right: -9px; padding-top: 2px; clip-path: polygon(10px 0, 100% 0, calc(100% - 10px) 100%, 0 100%); }
  .tab:first-child { clip-path: polygon(0 0, 100% 0, calc(100% - 10px) 100%, 0 100%); }
  .k { width: 76px; background: linear-gradient(#f66, #f22 50%, #fbb 55%, #f00 85%); color: #fff; padding-right: 6px; }
  .d { width: 85px; background: linear-gradient(#fff 55%, #fde9b8 80%, #f5b63c); font-weight: 700; }
  .s { width: 81px; background: linear-gradient(#ff6, #ff0 60%, #ffa); }
  .m { width: 98px; background: linear-gradient(#75608f, #8872a0 50%, #d9d2e3 55%, #6a558a); color: #fff; }
  .x { width: 71px; background: linear-gradient(#a05a1c, #b4682a 50%, #e3cbb2 55%, #9a5216); color: #fff; }
  .n { width: 42px; background: #d6e4f8; padding: 0; }
  .split { width: 6px; border: 1px solid #7f9cc8; background: #fff; }
  .bar { width: 525px; flex: none; display: flex; align-items: center; background: linear-gradient(#6f91bf, #86a5cf); }
  .bar button { width: 20px; }
  .thumb { flex: 1; margin-right: 48px; height: 15px; border: 1px solid #4f6a95; border-radius: 2px; background: linear-gradient(#f3f6fb, #dde5f0 45%, #b9c7dc 50%, #d5dfec); display: flex; align-items: center; justify-content: center; }
  .thumb::after { content: ""; width: 7px; height: 8px; background: repeating-linear-gradient(90deg, #6f7d92 0 1px, #0000 1px 2px); }
  .end { width: 16px; background: #8cabd8; }
`, `
  <div class="nav"><button aria-label="First sheet"><xl-icon name="first"></xl-icon></button><button aria-label="Previous sheet"><xl-icon name="prev"></xl-icon></button><button aria-label="Next sheet"><xl-icon name="next"></xl-icon></button><button aria-label="Last sheet"><xl-icon name="last"></xl-icon></button></div>
  <div class="tabs"><button class="tab k">Konversi</button><button class="tab d">Database</button><button class="tab s">Soal-Soal</button><button class="tab m">Matematika</button><button class="tab x">Matriks</button><button class="tab n" aria-label="Insert worksheet"><xl-icon name="newsheet"></xl-icon></button></div>
  <div class="split"></div>
  <div class="bar"><button aria-label="Scroll left"><xl-icon name="prev"></xl-icon></button><div class="thumb"></div><button aria-label="Scroll right"><xl-icon name="next"></xl-icon></button></div>
  <div class="split"></div><div class="end"></div>
`);

/* ---------- status bar ---------- */
define('xl-status', `
  :host { height: 26px; display: flex; align-items: center; color: #15428b; border-bottom: 1px solid #4a6389;
    background: linear-gradient(#dbe8fb, #c4dafa 8px, #aecbf5 9px, #d0e2fb 22px, #b1caf0 23px); line-height: 20px; padding-bottom: 3px; }
  .ready { padding: 0 9px 0 11px; border-right: 1px solid #8fb2e4; box-shadow: 1px 0 #eef5ff; }
  .right { margin-left: auto; width: 268px; height: 22px; padding-left: 5px; display: flex; align-items: center; border-left: 1px solid #7f9fcb; box-shadow: inset 1px 0 #e4effd;
    background: linear-gradient(#c4daf8, #a4c3f0 8px, #84a9dd 9px, #9dbeea); }
  .views { display: flex; height: 19px; border: 1px solid #c4d8f3; background: #b5cdee; }
  .views button { width: 18px; }
  .views button.on { background: linear-gradient(#fde0ae, #fcb95a); }
  .pct { width: 38px; margin-right: 7px; text-align: center; }
  .slide { width: 101px; height: 16px; background: linear-gradient(90deg, #0000 52px, #dcebff 52px 53px, #0000 53px) center/100% 10px no-repeat, linear-gradient(#52709f, #dcebff) center/100% 2px no-repeat; }
  input { appearance: none; display: block; width: 101px; height: 16px; }
  input::-webkit-slider-thumb { appearance: none; width: 9px; height: 12px; background: #e7effb; border: 1px solid #52699a; border-radius: 1px 1px 5px 5px; }
  .end { margin-left: auto; padding: 8px 1px 0 0; }
`, `
  <span class="ready">Ready</span>
  <div class="right"><div class="views"><button class="on" aria-label="Normal"><xl-icon name="vnormal"></xl-icon></button><button aria-label="Page layout"><xl-icon name="vpage"></xl-icon></button><button aria-label="Page break preview"><xl-icon name="vbreak"></xl-icon></button></div>
  <span class="pct">67%</span><button aria-label="Zoom out"><xl-icon name="minus"></xl-icon></button><div class="slide"><input type="range" aria-label="Zoom" min="0" max="100" value="32"></div><button aria-label="Zoom in"><xl-icon name="plus"></xl-icon></button><xl-icon class="end" name="resize"></xl-icon></div>
`);

/* ---------- taskbar ---------- */
define('win-taskbar', `
  :host { height: 31px; display: flex; align-items: center; position: relative; color: #fff; border-top: 1px solid #dbe8f6;
    background: linear-gradient(90deg, #8293aa 0 60px, #a7c0dc 88px calc(100% - 260px), #8293aa calc(100% - 230px)); }
  .start { position: absolute; left: 8px; bottom: -1px; border-radius: 50%; }
  .grip1 { margin-left: 56px; }
  .quick { display: flex; margin-left: 8px; }
  .quick button { width: 46px; height: 28px; }
  .run { display: flex; gap: 3px; margin-left: 1px; }
  .run button { width: 43px; height: 29px; border: 1px solid #47566c; border-radius: 2px; background: linear-gradient(135deg, #d3e0ef, #aec4de); box-shadow: inset 0 0 0 1px #e6eef8; }
  .run button.on { background: linear-gradient(135deg, #eaf1f8, #cddbea); }
  .tray { margin-left: auto; display: flex; align-items: center; }
  .in { margin: 0 18px 4px 4px; color: #f2ead8; }
  .tray button { margin-right: 8px; }
  .tray .more { margin-right: 13px; }
  .tray .vol { margin-right: 10px; }
  .time { margin: 0 28px 0 22px; font-size: 11px; }
  .desk { width: 14px; height: 30px; border: 1px solid #3f4e63; background: linear-gradient(135deg, #8d9bb0, #55657c); box-shadow: inset 0 0 0 1px #a7b4c7; }
  .tray .desk { margin: 0; }
`, `
  <button class="start" aria-label="Start"><xl-icon name="start"></xl-icon></button>
  <xl-icon class="grip1" name="grip"></xl-icon>
  <div class="quick"><button aria-label="VLC"><xl-icon name="vlc"></xl-icon></button><button aria-label="Media Player"><xl-icon name="wmp"></xl-icon></button><button aria-label="Firefox"><xl-icon name="firefox"></xl-icon></button><button aria-label="Internet Explorer"><xl-icon name="ie"></xl-icon></button><button aria-label="Word"><xl-icon name="word"></xl-icon></button></div>
  <div class="run"><button aria-label="Remote"><xl-icon name="remote"></xl-icon></button><button aria-label="Explorer"><xl-icon name="explorer"></xl-icon></button><button class="on" aria-label="Excel"><xl-icon name="excel"></xl-icon></button></div>
  <div class="tray"><xl-icon name="grip"></xl-icon><span class="in">IN</span><button class="more" aria-label="Show hidden icons"><xl-icon name="trayup"></xl-icon></button><button class="vol" aria-label="Volume"><xl-icon name="speaker"></xl-icon></button><button aria-label="Battery"><xl-icon name="battery"></xl-icon></button><button aria-label="Network"><xl-icon name="net"></xl-icon></button><span class="time">20:14</span><button class="desk" aria-label="Show desktop"></button></div>
`);

define('xl-app', `
  :host { display: flex; flex-direction: column; height: 100vh; font: 11px/16px "Open Sans", "Noto Sans", sans-serif; background: #b1caf0; }
  xl-titlebar, xl-tabs, xl-ribbon, xl-formula, xl-sheettabs, xl-status, win-taskbar { flex: none; }
  main { flex: 1; min-height: 0; display: flex; margin: 0 6px 0 4px; }
`, `
  <xl-titlebar>Tugas Praktikum 2 - Microsoft Excel</xl-titlebar>
  <xl-tabs></xl-tabs><xl-ribbon></xl-ribbon><xl-formula></xl-formula>
  <main><xl-sheet></xl-sheet><xl-vscroll></xl-vscroll></main>
  <xl-sheettabs></xl-sheettabs><xl-status></xl-status><win-taskbar></win-taskbar>
`);
</script>
</body>
</html>
